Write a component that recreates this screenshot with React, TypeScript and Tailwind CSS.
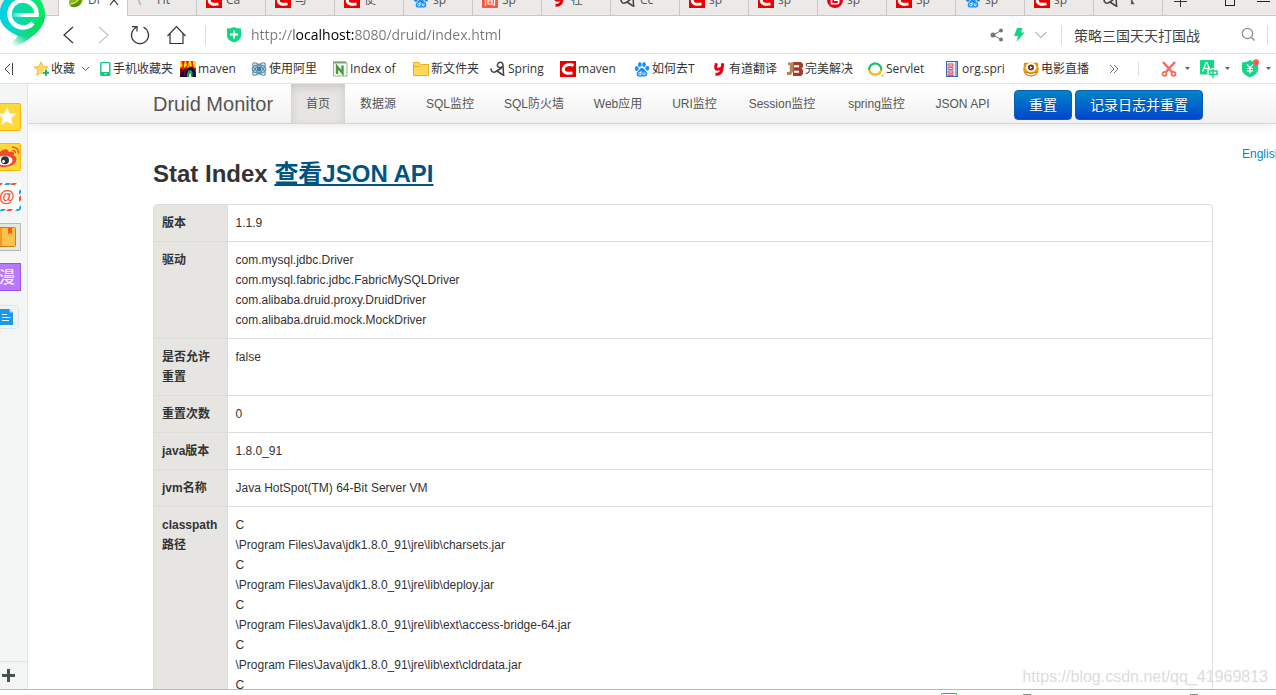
import type { ReactNode } from "react";

const svg = "block shrink-0";

/* ---------- site icons ---------- */

function CsdnIcon() {
  return (
    <svg className={svg} width="16" height="16" viewBox="0 0 16 16">
      <rect width="16" height="16" fill="#e80000" />
      <path d="M13.500 4.300C8.500 2.600 3.800 4.100 3.300 8c-.4 3.800 4 5 9.200 3.900" fill="none" stroke="#fff" strokeWidth="3" />
    </svg>
  );
}

function BaiduIcon() {
  return (
    <svg className={svg} width="16" height="16" viewBox="0 0 16 16" fill="#1a8cff">
      <ellipse cx="2.800" cy="7.500" rx="1.900" ry="2.500" />
      <ellipse cx="5.800" cy="3.500" rx="1.800" ry="2.600" />
      <ellipse cx="10" cy="3.500" rx="1.800" ry="2.600" />
      <ellipse cx="13.300" cy="7.300" rx="1.900" ry="2.400" />
      <path d="M8 7c2.200 0 2.500 2.200 4.200 3.600 2 1.700 1.200 4.600-1 4.800-2 .1-4.400.1-6.400 0-2.400-.2-3-3.200-1-4.900C5.500 9.200 5.800 7 8 7z" />
      <path d="M7 10v3.700H5.700a1 1 0 0 1 0-2.200H7M9 11.300v1.500q0 .9 1 .9h1v-2.400" fill="none" stroke="#fff" strokeWidth=".9" />
    </svg>
  );
}

function JianIcon() {
  return (
    <svg className={svg} width="16" height="16" viewBox="0 0 16 16">
      <rect width="16" height="16" rx="1" fill="#f35a40" />
      <path d="M3.500 5v9M6 3.500h6.500V13h-2M6 6.500h4v5.500H6zM6 9h4M3.500 2.500l1 1.500" fill="none" stroke="#fff" strokeWidth="1.200" />
    </svg>
  );
}

function YoudaoIcon() {
  return (
    <svg className={svg} width="16" height="16" viewBox="0 0 16 16">
      <path d="M5.300 2.300 4.700 6q-.2 2.300 1.800 2.300 2.500 0 4-1.300" fill="none" stroke="#e60012" strokeWidth="3" />
      <path d="M11.800 2.300 10.800 9q-1 4.500-6.300 4.300" fill="none" stroke="#e60012" strokeWidth="3" />
    </svg>
  );
}

function SpringIcon() {
  return (
    <svg className={svg} width="16" height="16" viewBox="0 0 16 16" fill="none" stroke="#444440">
      <path d="M1 7.500c0 3.500 2.500 4.500 5 3C8.500 9 10.500 7.500 12.500 6" strokeWidth="1.600" />
      <path d="M12.500 5.500c-2 2-5.800 1-5-2C8.200.6 12 .6 12.800 3c.6 2.300.2 7 1 12" strokeWidth="1.500" />
      <path d="M7 10l6 4" strokeWidth="1.600" />
    </svg>
  );
}

function LeafIcon() {
  return (
    <svg className={svg} width="16" height="16" viewBox="0 0 16 16">
      <path d="M15 1C7 2 1 5 1 11c0 3 3 5 7 4 6-1 8-7 7-14z" fill="#8cb81c" />
      <path d="M2 13c5 0 9-3 11-7 1 5-2 9-7 9-2 0-3-.7-4-2z" fill="#5f8d10" />
      <path d="M2 12c4 0 8-3 10-7" stroke="#e2ee9c" fill="none" />
    </svg>
  );
}

function LoadingIcon() {
  return (
    <svg className={svg} width="16" height="16" viewBox="0 0 16 16">
      <path d="M4 2C1 5 1 10 4 13" stroke="#b3b3b3" strokeWidth="1.400" fill="none" />
    </svg>
  );
}

function GiteeIcon() {
  return (
    <svg className={svg} width="16" height="16" viewBox="0 0 16 16">
      <circle cx="8" cy="8" r="8" fill="#e8001c" />
      <path d="M12 4.500H7q-2.500 0-2.500 2.500v4.800H10q1.700 0 1.700-1.700V8.200H7" fill="none" stroke="#fff" strokeWidth="1.600" />
    </svg>
  );
}

function PhoneIcon() {
  return (
    <svg className={svg} width="11" height="16" viewBox="0 0 11 16">
      <rect x=".8" y="1.600" width="9" height="12.800" rx="1" fill="#fff" stroke="#10c878" strokeWidth="1.400" />
      <path d="M1 12.500h8.700" stroke="#10c878" strokeWidth="3" />
      <path d="M4.500 12.800h2" stroke="#fff" />
    </svg>
  );
}

function FlameIcon() {
  return (
    <svg className={svg} width="16" height="16" viewBox="0 0 16 16">
      <rect width="16" height="16" fill="#f01a0c" />
      <path d="M0 0h2l1.500 5L5 0h1l1.500 5L9 0h2l1 4 1-4h3v7l-2-1-1.500-2L11 6 9.500 4.500 8 7 6.500 4 5 7 3 5 0 7z" fill="#ffe000" />
      <path d="M2 0l1.500 6M7 0l1 5M12 0l.5 5" stroke="#f01a0c" strokeWidth="1.300" />
      <path d="M0 7l3 2 2-2 2 1-4 8H0z" fill="#7a0a0a" />
      <path d="M0 14l4-5v7H0z" fill="#120a20" />
      <path d="M4 16q1-9 7-10 5 1 5 10z" fill="#0c0a50" />
      <path d="M7 16v-3q1-4 3-4 2.500 0 2.500 4v3z" fill="#1fa83b" />
      <path d="M9 16v-2.500q1-2 2 0V16z" fill="#fff" />
    </svg>
  );
}

function ReactIcon() {
  return (
    <svg className={svg} width="16" height="16" viewBox="0 0 16 16" fill="none" stroke="#5d8ba3" strokeWidth="1.200">
      <rect x="2" y="2" width="12" height="12" rx="4" fill="#dbe9f1" stroke="none" />
      <ellipse cx="8" cy="8" rx="8.200" ry="3.200" transform="rotate(45 8 8)" />
      <ellipse cx="8" cy="8" rx="8.200" ry="3.200" transform="rotate(135 8 8)" />
      <ellipse cx="8" cy="8" rx="6.800" ry="4.200" />
      <circle cx="8" cy="8" r="2.400" fill="#2f81ad" stroke="none" />
    </svg>
  );
}

function NIcon() {
  return (
    <svg className={svg} width="16" height="16" viewBox="0 0 16 16">
      <path d="M1.500 2l1-1h11l1.500 1v13H1.500z" fill="#f7fbf5" stroke="#8fb58a" />
      <path d="M1 1.500h13" stroke="#7fa77a" strokeWidth="2" />
      <path d="M5 13V5.500l5.500 6.500V4.500" stroke="#4a9b3e" strokeWidth="2.400" fill="none" />
    </svg>
  );
}

function FolderIcon() {
  return (
    <svg className={svg} width="16" height="16" viewBox="0 0 16 16">
      <path d="M.5 1.500h5.500l2 2h7.500v11H.5z" fill="#ffd85a" stroke="#efac1c" />
      <path d="M1 5.500h5.500l1.500-1.500" stroke="#efac1c" fill="none" />
    </svg>
  );
}

function JbIcon() {
  return (
    <svg className={svg} width="16" height="16" viewBox="0 0 16 16">
      <path d="M6 1h8l2 2v3l-1.500 1.500L16 9v4l-2 2H6z" fill="#a83a2c" />
      <path d="M1 1.500h5.500v8L4 14H0v-3h2.700V4H1z" fill="#b98558" />
      <path d="M7 5.200h5M7 10.700h5" stroke="#fff" strokeWidth="1.900" />
    </svg>
  );
}

function ServletIcon() {
  return (
    <svg className={svg} width="16" height="16" viewBox="0 0 16 16" fill="none" strokeWidth="2.200">
      <path d="M1.300 9.500a6 6 0 1 1 11.800 0" stroke="#1fc06b" />
      <path d="M1.300 8.800a6 6 0 0 0 11.800 0" stroke="#f8b916" />
      <path d="M13.500 14.500h2" stroke="#f8b916" strokeWidth="1.800" />
    </svg>
  );
}

function DocIcon() {
  return (
    <svg className={svg} width="16" height="16" viewBox="0 0 16 16">
      <rect x="2.500" y=".5" width="11" height="15" fill="#e6ecf8" stroke="#3e65b4" />
      <path d="M12 1v14" stroke="#3e65b4" />
      <path d="M4 3h5v2H4zm0 3.500h5v2H4zM4 10h5v2H4zm0 3h5v1.500H4z" fill="none" stroke="#e84c5e" />
    </svg>
  );
}

function MovieIcon() {
  return (
    <svg className={svg} width="16" height="16" viewBox="0 0 16 16">
      <circle cx="3" cy="4" r="2.400" fill="#e58a11" />
      <circle cx="13" cy="4" r="2.400" fill="#e58a11" />
      <ellipse cx="8" cy="8.500" rx="7.800" ry="7" fill="#f39a1a" />
      <ellipse cx="8" cy="6.500" rx="5.300" ry="4.600" fill="#fff" />
      <circle cx="8" cy="6.500" r="3" fill="#7a3508" />
      <path d="M7 5v3l2.500-1.500z" fill="#fff" />
      <path d="M1.500 11q6.500 3 13 0-2 4-6.500 4t-6.500-4z" fill="#fff3d8" stroke="#c35d08" strokeWidth=".7" />
    </svg>
  );
}

/* ---------- browser chrome ---------- */

const tabs: { icon: ReactNode; title: string }[] = [
  { icon: <LoadingIcon />, title: "Ht" },
  { icon: <CsdnIcon />, title: "Ca" },
  { icon: <CsdnIcon />, title: "与" },
  { icon: <CsdnIcon />, title: "使" },
  { icon: <BaiduIcon />, title: "sp" },
  { icon: <JianIcon />, title: "Sp" },
  { icon: <YoudaoIcon />, title: "在" },
  { icon: <SpringIcon />, title: "Cc" },
  { icon: <CsdnIcon />, title: "sp" },
  { icon: <CsdnIcon />, title: "sp" },
  { icon: <GiteeIcon />, title: "sp" },
  { icon: <CsdnIcon />, title: "Sp" },
  { icon: <BaiduIcon />, title: "sp" },
  { icon: <CsdnIcon />, title: "sp" },
  { icon: <SpringIcon />, title: "【" },
];

function TabStrip() {
  return (
    <div className="flex h-4 shrink-0 items-end overflow-hidden bg-[#ebeae8] font-['Open_Sans','Noto_Sans_CJK_SC',sans-serif] text-xs leading-8 text-[#555]">
      <div className="h-8 w-[59px] shrink-0 border-r border-b border-[#c9c8c4]" />
      <div className="flex h-8 w-[68px] shrink-0 items-center bg-white pl-[9px]">
        <LeafIcon />
        <span className="ml-1 w-4 overflow-hidden">Dr</span>
        <button aria-label="关闭标签" className="ml-auto pr-[7px]">
          <svg className={svg} width="12" height="12" viewBox="0 0 12 12">
            <path d="M2 1l8 10M10 1L2 11" stroke="#333" strokeWidth="1.200" />
          </svg>
        </button>
      </div>
      {tabs.map((t, i) => (
        <div key={i} className="flex h-8 w-[69px] shrink-0 items-center border-b border-l border-[#c9c8c4] pl-[9px]">
          {t.icon}
          <span className="ml-1 w-4 overflow-hidden whitespace-nowrap">{t.title}</span>
        </div>
      ))}
      <div className="flex h-8 flex-1 items-center justify-between border-b border-l border-[#c9c8c4] pr-[6px] pl-[11px]">
        <button aria-label="新标签">
          <svg className={svg} width="14" height="14" viewBox="0 0 14 14">
            <path d="M6.500 0v14M0 8.500h13" stroke="#333" />
          </svg>
        </button>
        <button aria-label="还原" className="ml-4">
          <svg className={svg} width="12" height="12" viewBox="0 0 12 12">
            <rect x=".5" y=".5" width="9" height="11" fill="none" stroke="#222" />
          </svg>
        </button>
        <button aria-label="最小化">
          <svg className={svg} width="13" height="12" viewBox="0 0 13 12">
            <path d="M0 7.500h13" stroke="#222" />
          </svg>
        </button>
      </div>
    </div>
  );
}

function Logo() {
  return (
    <svg className="pointer-events-none absolute top-0 left-0" width="48" height="48" viewBox="0 0 48 48">
      <defs>
        <linearGradient id="brand" x1="0" y1="0" x2="1" y2="0">
          <stop offset="0" stopColor="#04d0ee" />
          <stop offset=".55" stopColor="#0cdc9c" />
          <stop offset="1" stopColor="#04ee5c" />
        </linearGradient>
        <linearGradient id="tail" gradientUnits="userSpaceOnUse" x1="34" y1="24" x2="14" y2="47">
          <stop offset="0" stopColor="#04e060" />
          <stop offset=".5" stopColor="#14d890" />
          <stop offset="1" stopColor="#14d890" stopOpacity="0" />
        </linearGradient>
        <linearGradient id="bar" x1="0" y1="0" x2="1" y2="0">
          <stop offset="0" stopColor="#fff" stopOpacity=".1" />
          <stop offset=".5" stopColor="#fff" />
        </linearGradient>
      </defs>
      <path d="M22-9a23 23 0 0 1 23 23Q45 24 38 31 30 40 15 46q-3 0-6-1l9-9Q5 30 1 22A23 23 0 0 1 22-9z" fill="url(#brand)" mask="url(#fade)" />
      <mask id="fade">
        <rect x="-10" y="-10" width="60" height="46" fill="#fff" />
      </mask>
      <path d="M45 14q0 10-7 17Q30 40 15 47q-3 0-6-1l9-10z" fill="url(#tail)" />
      <circle cx="23" cy="14" r="13.500" fill="none" stroke="#fff" strokeWidth="4.500" strokeDasharray="76 9" transform="rotate(42 23 14)" />
      <rect x="12" y="13" width="26.700" height="4" fill="url(#bar)" />
    </svg>
  );
}

function AddressBar() {
  return (
    <div className="flex h-[38px] shrink-0 items-center border-b border-[#e0e0de] bg-white pl-[60px]">
      <button aria-label="后退">
        <svg className={svg} width="16" height="20" viewBox="0 0 16 20">
          <path d="M13 2L4 10l9 8" fill="none" stroke="#333" strokeWidth="1.200" />
        </svg>
      </button>
      <button aria-label="前进" className="ml-5">
        <svg className={svg} width="16" height="20" viewBox="0 0 16 20">
          <path d="M3 2l9 8-9 8" fill="none" stroke="#c4c4c4" strokeWidth="1.200" />
        </svg>
      </button>
      <button aria-label="刷新" className="ml-[18px]">
        <svg className={svg} width="20" height="20" viewBox="0 0 20 20" fill="none" stroke="#333" strokeWidth="1.200">
          <path d="M6.500 2.300a8.500 8.500 0 1 0 7 0" />
          <path d="M2 1.600h5v5" />
        </svg>
      </button>
      <button aria-label="主页" className="ml-4">
        <svg className={svg} width="22" height="20" viewBox="0 0 22 20" fill="none" stroke="#333" strokeWidth="1.200">
          <path d="M1.500 11L10.500 1.600 19.500 11M4 9v9.500h13V9" />
        </svg>
      </button>
      <span className="ml-[17px] h-5 w-px bg-[#dcdcdc]" />
      <svg className="ml-5 block shrink-0" width="16" height="18" viewBox="0 0 16 18">
        <path d="M1 2.500q4 0 7-1.500 3 1.500 7 1.500V10q0 4-7 6.500Q1 14 1 10z" fill="#10d784" />
        <path d="M8 4.500v8M4 8.500h8" stroke="#fff" strokeWidth="2" />
      </svg>
      <input
        aria-label="地址"
        defaultValue="http://localhost:8080/druid/index.html"
        className="ml-[9px] h-7 min-w-0 flex-1 bg-[linear-gradient(90deg,#777_43px,#000_43px,#000_103px,#777_103px)] bg-clip-text font-['Open_Sans','Noto_Sans',sans-serif] text-sm text-transparent outline-none"
      />
      <button aria-label="分享">
        <svg className={svg} width="14" height="14" viewBox="0 0 14 14" fill="#777">
          <path d="M11 2.500L3 7l8 4.500" fill="none" stroke="#777" />
          <circle cx="11" cy="2.500" r="2" />
          <circle cx="3" cy="7" r="2.500" />
          <circle cx="11" cy="11.500" r="2" />
        </svg>
      </button>
      <button aria-label="极速模式" className="ml-[9px]">
        <svg className={svg} width="12" height="14" viewBox="0 0 12 14">
          <path d="M4 0h5.500L8 4.500h3.500L3.500 14 5 8H1z" fill="#10d784" />
        </svg>
      </button>
      <button aria-label="展开" className="ml-[10px]">
        <svg className={svg} width="12" height="8" viewBox="0 0 12 8">
          <path d="M.5 1l5.500 5.500L11.500 1" fill="none" stroke="#888" />
        </svg>
      </button>
      <span className="ml-[14px] h-5 w-px bg-[#dcdcdc]" />
      <input
        aria-label="搜索"
        defaultValue="策略三国天天打国战"
        className="ml-3 h-7 w-[167px] text-sm text-[#444] outline-none"
      />
      <button aria-label="搜索按钮">
        <svg className={svg} width="15" height="15" viewBox="0 0 15 15" fill="none" stroke="#888" strokeWidth="1.200">
          <circle cx="6.500" cy="6.500" r="5.200" />
          <path d="M10.500 10.500l3 3" />
        </svg>
      </button>
      <span className="mr-2 ml-[11px] h-5 w-px bg-[#dcdcdc]" />
    </div>
  );
}

const bookmarks = [
  { icon: <PhoneIcon />, label: "手机收藏夹", width: "w-20" },
  { icon: <FlameIcon />, label: "maven", width: "w-[71px]" },
  { icon: <ReactIcon />, label: "使用阿里", width: "w-[81px]" },
  { icon: <NIcon />, label: "Index of", width: "w-[81px]" },
  { icon: <FolderIcon />, label: "新文件夹", width: "w-[77px]" },
  { icon: <SpringIcon />, label: "Spring", width: "w-[70px]" },
  { icon: <CsdnIcon />, label: "maven", width: "w-[74px]" },
  { icon: <BaiduIcon />, label: "如何去T", width: "w-[77px]" },
  { icon: <YoudaoIcon />, label: "有道翻译", width: "w-[76px]" },
  { icon: <JbIcon />, label: "完美解决", width: "w-[81px]" },
  { icon: <ServletIcon />, label: "Servlet", width: "w-[76px]" },
  { icon: <DocIcon />, label: "org.spri", width: "w-[79px]" },
  { icon: <MovieIcon />, label: "电影直播", width: "w-[84px]" },
];

function Caret() {
  return (
    <svg className={svg} width="5" height="3" viewBox="0 0 5 3">
      <path d="M0 0h5L2.500 3z" fill="#666" />
    </svg>
  );
}

function BookmarkBar() {
  return (
    <div className="flex h-[30px] shrink-0 items-center border-b border-[#e0e0de] bg-white pl-1 font-['Open_Sans','Noto_Sans_CJK_SC',sans-serif] text-xs text-[#333]">
      <button aria-label="收起侧栏">
        <svg className={svg} width="10" height="12" viewBox="0 0 10 12" fill="none" stroke="#444">
          <path d="M6 1L1 6l5 5M8.500 0v12" />
        </svg>
      </button>
      <button className="ml-5 flex items-center gap-px">
        <svg className={svg} width="16" height="16" viewBox="0 0 16 16">
          <path d="M7 .8l2 4.600 5 .5-3.700 3.400 1 5L7 11.700l-4.300 2.500 1-5L0 5.900l5-.5z" fill="#ffdc68" stroke="#eeb02c" strokeWidth=".8" />
          <path d="M12 8.500v6.500M8.700 11.800h6.600" stroke="#fff" strokeWidth="4" />
          <path d="M12 8.800v6M9 11.800h6" stroke="#14b46c" strokeWidth="2" />
        </svg>
        收藏
      </button>
      <button aria-label="收藏菜单" className="ml-[5px]">
        <svg className={svg} width="11" height="8" viewBox="0 0 11 8">
          <path d="M2 2l3.500 3.500L9 2" fill="none" stroke="#666" />
        </svg>
      </button>
      <div className="ml-[9px] flex min-w-0">
        {bookmarks.map((b, i) => (
          <a key={i} href="#" className={`flex shrink-0 items-center gap-0.5 whitespace-nowrap ${b.width}`}>
            {b.icon}
            {b.label}
          </a>
        ))}
      </div>
      <button aria-label="更多收藏" className="ml-0.5">
        <svg className={svg} width="10" height="10" viewBox="0 0 10 10">
          <path d="M1 1l4 4-4 4M5 1l4 4-4 4" fill="none" stroke="#777" />
        </svg>
      </button>
      <div className="ml-auto flex items-center pr-[5px]">
        <span className="mr-[22px] h-3.5 w-px bg-[#dcdcdc]" />
        <button aria-label="截图" className="flex items-center gap-2">
          <svg className={svg} width="16" height="16" viewBox="0 0 16 16" fill="none" stroke="#fb6a5c">
            <path d="M2 1l9.500 10.500M14 1L4.500 11.500" strokeWidth="2.600" />
            <circle cx="3.500" cy="12.800" r="2" strokeWidth="1.700" />
            <circle cx="12.500" cy="12.800" r="2" strokeWidth="1.700" />
          </svg>
          <Caret />
        </button>
        <button aria-label="翻译" className="ml-[10px] flex items-center gap-[7px]">
          <svg className={svg} width="18" height="18" viewBox="0 0 18 18">
            <rect width="14" height="14.500" rx="1" fill="#10d784" />
            <path d="M2.500 11.500L6 3h1l3 7M4 8.500h5" fill="none" stroke="#fff" strokeWidth="1.300" />
            <path d="M13 8v10M9 11h8.500v4H9z" fill="none" stroke="#fff" strokeWidth="3.200" />
            <path d="M13 9v9M9.500 11h7.500v3.500H9.500z" fill="none" stroke="#10d784" strokeWidth="1.500" />
          </svg>
          <Caret />
        </button>
        <button aria-label="购物助手" className="ml-[11px] flex items-center gap-[7px]">
          <svg className={svg} width="18" height="19" viewBox="0 0 18 19">
            <path d="M1 3.500q4.500 0 8-2.500 3.500 2.500 8 2.500v7q0 4.500-8 8-8-3.500-8-8z" fill="#10d784" />
            <path d="M6 5.500l3 3.500 3-3.500M9 9v5.500M5.800 9.500h6.400M5.800 11.800h6.400" stroke="#fff" strokeWidth="1.200" fill="none" />
            <circle cx="15" cy="3.200" r="3" fill="#fb5c50" />
          </svg>
          <Caret />
        </button>
      </div>
    </div>
  );
}

function SideBar() {
  return (
    <aside className="flex w-7 shrink-0 flex-col border-r border-[#e2e4e3] bg-[#f3f6f5] pt-[19px]">
      <div className="flex flex-1 flex-col items-start gap-3">
        <button aria-label="收藏夹">
          <svg className={svg} width="21" height="28" viewBox="0 0 21 28">
            <rect x="-5" y=".5" width="25.500" height="27" rx="1" fill="#ffd83c" stroke="#f7b80a" />
            <path d="M7 4.500l2.700 6 6.300.6-4.800 4.200 1.500 6.500L7 18.500l-5.700 3.300 1.500-6.500L-2 11.100l6.300-.6z" fill="#fff" />
          </svg>
        </button>
        <button aria-label="微博">
          <svg className={svg} width="21" height="28" viewBox="0 0 21 28">
            <rect x="-5" y=".5" width="25.500" height="27" rx="1" fill="#ffd83c" stroke="#f7b80a" />
            <path d="M-2 11Q3 5 7 6.500 9 7 8.500 9 13 7.500 14 10q.3 1.500-.5 2.500 3.500 1 3 4.500Q15 23 5 24-2 24-4 21z" fill="#f04a2a" />
            <ellipse cx="4.500" cy="17.500" rx="8" ry="4.800" fill="#fff" />
            <circle cx="5" cy="17.300" r="4" fill="#333" />
            <circle cx="3.500" cy="18.500" r="1.400" fill="#fff" />
            <path d="M12.500 7.500q3-.5 3 3M12 4.300q7-.5 6.500 6.500" fill="none" stroke="#f04a2a" strokeWidth="1.400" />
          </svg>
        </button>
        <button aria-label="邮箱">
          <svg className={svg} width="21" height="28" viewBox="0 0 21 28">
            <rect x="-5" y="0" width="26" height="28" rx="1" fill="#fff" />
            <path d="M0 0h3l-2 2H0zM12 0h5l-2 2h-5zM21 12v5l-2 2v-5zM8 26h5l-2 2H6z" fill="#f4523a" />
            <path d="M6 0h5L9 2H4zM21 6v4l-2 2V8zM21 22v4l-2 2h-4l2-2h2v-2zM1 26h5l-2 2H0z" fill="#1ea5f2" />
            <text x="-1" y="19" fontSize="16" fontFamily="Liberation Sans, sans-serif" fontWeight="bold" fill="#f4523a">@</text>
          </svg>
        </button>
        <button aria-label="小说">
          <svg className={svg} width="21" height="28" viewBox="0 0 21 28">
            <rect x="-5" y=".5" width="25.500" height="27" fill="#e6e6e2" stroke="#b9b9b4" />
            <rect x="-4" y="4.500" width="19.500" height="19" rx="1" fill="#fdc14d" stroke="#c8811c" />
            <path d="M1 5v18" stroke="#f09a20" strokeWidth="2" />
            <path d="M8 5h4v6.500l-2-1.800-2 1.800z" fill="#fb5a10" />
          </svg>
        </button>
        <button aria-label="漫画">
          <svg className={svg} width="21" height="28" viewBox="0 0 21 28">
            <rect x="-5" y=".5" width="25.500" height="27" fill="#b878fa" stroke="#9a4fee" />
            <text x="-17" y="20" fontSize="16" fontFamily="Noto Sans CJK SC, sans-serif" fill="#fff">动漫</text>
          </svg>
        </button>
        <button aria-label="文档" className="mt-0.5">
          <svg className={svg} width="19" height="24" viewBox="0 0 19 24">
            <rect x="-5" y=".5" width="23.500" height="23" rx="3" fill="#f1f3f2" stroke="#e2e4e3" />
            <path d="M0 4h9.500l3.500 3.500V20H0z" fill="#1a98f0" />
            <path d="M9.500 4v3.500H13z" fill="#a8d8fb" />
            <path d="M2 9.500h5M2 12.500h8.500M2 15.500h7" stroke="#fff" strokeWidth="1.200" />
          </svg>
        </button>
      </div>
      <button aria-label="添加" className="flex h-7 items-center border-t border-[#e2e4e3] pl-0.5">
        <svg className={svg} width="13" height="13" viewBox="0 0 13 13">
          <path d="M6.500 0v13M0 6.500h13" stroke="#46504c" strokeWidth="3" />
        </svg>
      </button>
    </aside>
  );
}

/* ---------- druid page ---------- */

const navItems = [
  { label: "首页", width: "w-[54px]" },
  { label: "数据源", width: "w-[66px]" },
  { label: "SQL监控", width: "w-[78px]" },
  { label: "SQL防火墙", width: "w-[90px]" },
  { label: "Web应用", width: "w-[78px]" },
  { label: "URI监控", width: "w-[75px]" },
  { label: "Session监控", width: "w-[100px]" },
  { label: "spring监控", width: "w-[89px]" },
  { label: "JSON API", width: "w-[83px]" },
];

const navButton =
  "h-[30px] shrink-0 rounded border border-[#0b5fae] bg-linear-to-b from-[#0a84c8] to-[#0044cc] px-3.5 text-sm text-white text-shadow-[0_-1px_0_#00000040]";

function NavBar() {
  return (
    <nav className="flex h-10 shrink-0 items-center border-b border-[#d6d6d2] bg-linear-to-b from-white to-[#f2f1f0] pl-[125px] shadow-[0_1px_10px_#0000001a]">
      <a href="#" className="mr-5 w-[118px] shrink-0 text-xl whitespace-nowrap text-[#555]">
        Druid Monitor
      </a>
      <ul className="flex h-full">
        {navItems.map((n, i) => (
          <li key={n.label} className={`h-full shrink-0 ${n.width}`}>
            <a
              href="#"
              className={`flex h-full items-center justify-center whitespace-nowrap text-[#555] ${
                i === 0 ? "bg-[#e6e5e1] shadow-[inset_0_3px_8px_#00000020]" : ""
              }`}
            >
              {n.label}
            </a>
          </li>
        ))}
      </ul>
      <div className="ml-[10px] flex gap-[3px] pt-0.5">
        <button className={navButton}>重置</button>
        <button className={navButton}>记录日志并重置</button>
      </div>
    </nav>
  );
}

const rows: { name: string; values: string[] }[] = [
  { name: "版本", values: ["1.1.9"] },
  {
    name: "驱动",
    values: [
      "com.mysql.jdbc.Driver",
      "com.mysql.fabric.jdbc.FabricMySQLDriver",
      "com.alibaba.druid.proxy.DruidDriver",
      "com.alibaba.druid.mock.MockDriver",
    ],
  },
  { name: "是否允许重置", values: ["false"] },
  { name: "重置次数", values: ["0"] },
  { name: "java版本", values: ["1.8.0_91"] },
  { name: "jvm名称", values: ["Java HotSpot(TM) 64-Bit Server VM"] },
  {
    name: "classpath路径",
    values: [
      "C",
      "\\Program Files\\Java\\jdk1.8.0_91\\jre\\lib\\charsets.jar",
      "C",
      "\\Program Files\\Java\\jdk1.8.0_91\\jre\\lib\\deploy.jar",
      "C",
      "\\Program Files\\Java\\jdk1.8.0_91\\jre\\lib\\ext\\access-bridge-64.jar",
      "C",
      "\\Program Files\\Java\\jdk1.8.0_91\\jre\\lib\\ext\\cldrdata.jar",
      "C",
    ],
  },
];

function StatTable() {
  return (
    <div className="overflow-hidden rounded-t border border-[#dddcd9]">
      <table className="w-full table-fixed border-collapse text-left leading-5">
        <tbody>
          {rows.map((r) => (
            <tr key={r.name} className="border-b border-[#dddcd9] last:border-b-0">
              <th scope="row" className="w-[73px] border-r border-[#dddcd9] bg-[#e6e5e1] p-2 align-top font-bold">
                {r.name}
              </th>
              <td className="p-2 align-top">
                {r.values.map((v, i) => (
                  <div key={i}>{v}</div>
                ))}
              </td>
            </tr>
          ))}
        </tbody>
      </table>
    </div>
  );
}

export default function App() {
  return (
    <div className="relative flex h-screen flex-col overflow-hidden bg-white font-['Liberation_Sans','Noto_Sans_CJK_SC',sans-serif] text-xs text-[#333]">
      <TabStrip />
      <AddressBar />
      <BookmarkBar />
      <Logo />
      <div className="flex min-h-0 flex-1">
        <SideBar />
        <div className="flex min-w-0 flex-1 flex-col overflow-hidden">
          <NavBar />
          <div className="flex min-h-0 flex-1 pl-[125px]">
            <main className="min-w-0 flex-1 pt-[30px]">
              <h1 className="mb-[10px] text-2xl leading-10 font-bold">
                Stat Index{" "}
                <a href="#" className="text-[#005580] underline">
                  查看JSON API
                </a>
              </h1>
              <StatTable />
            </main>
            <div className="w-[63px] shrink-0 overflow-hidden pt-5 pl-[29px] leading-5">
              <a href="#" className="text-[#0088cc]">
                English
              </a>
            </div>
          </div>
        </div>
      </div>
      <footer className="flex h-[6px] shrink-0 items-end overflow-hidden border-t border-[#b9b9b5] bg-white pl-[941px]">
        <span className="h-0.5 w-4 rounded-t-sm border border-b-0 border-[#18b868]" />
        <span className="ml-[66px] h-px w-2 bg-[#888]" />
        <span className="ml-[159px] h-px w-2 bg-[#888]" />
      </footer>
      <div className="pointer-events-none absolute right-2 bottom-2 text-base leading-5 text-[#dcdcdc]">
        https://blog.csdn.net/qq_41969813
      </div>
    </div>
  );
}
